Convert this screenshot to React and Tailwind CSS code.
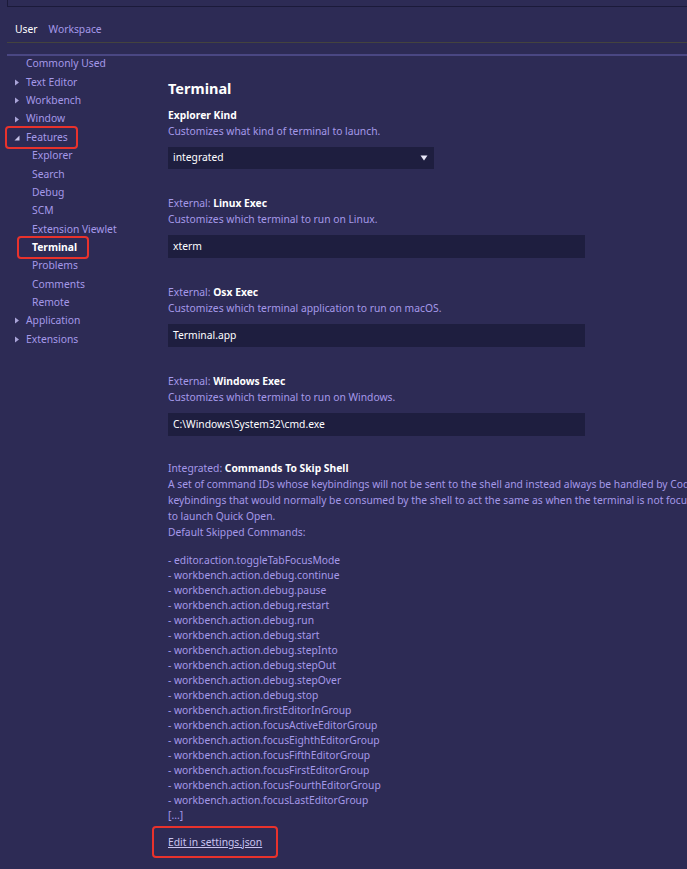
const font = { fontFamily: '"Noto Sans", "Open Sans", sans-serif' }

const tree = [
  { label: 'Commonly Used' },
  { label: 'Text Editor', arrow: 'closed' },
  { label: 'Workbench', arrow: 'closed' },
  { label: 'Window', arrow: 'closed' },
  { label: 'Features', arrow: 'open', boxed: true },
  { label: 'Explorer', child: true },
  { label: 'Search', child: true },
  { label: 'Debug', child: true },
  { label: 'SCM', child: true },
  { label: 'Extension Viewlet', child: true },
  { label: 'Terminal', child: true, active: true, boxed: true },
  { label: 'Problems', child: true },
  { label: 'Comments', child: true },
  { label: 'Remote', child: true },
  { label: 'Application', arrow: 'closed' },
  { label: 'Extensions', arrow: 'closed' },
]

const skipped = [
  'editor.action.toggleTabFocusMode',
  'workbench.action.debug.continue',
  'workbench.action.debug.pause',
  'workbench.action.debug.restart',
  'workbench.action.debug.run',
  'workbench.action.debug.start',
  'workbench.action.debug.stepInto',
  'workbench.action.debug.stepOut',
  'workbench.action.debug.stepOver',
  'workbench.action.debug.stop',
  'workbench.action.firstEditorInGroup',
  'workbench.action.focusActiveEditorGroup',
  'workbench.action.focusEighthEditorGroup',
  'workbench.action.focusFifthEditorGroup',
  'workbench.action.focusFirstEditorGroup',
  'workbench.action.focusFourthEditorGroup',
  'workbench.action.focusLastEditorGroup',
]

function Arrow({ open }) {
  if (open) {
    return (
      <svg width="6" height="6" viewBox="0 0 6 6" className="mr-[6px]">
        <path d="M5.5 0.5 L5.5 5.5 L0.5 5.5 Z" fill="#c8c4e8" />
      </svg>
    )
  }
  return (
    <svg width="6" height="7" viewBox="0 0 6 7" className="mr-[6px]">
      <path d="M1 0.5 L5 3.5 L1 6.5 Z" fill="#a9a4d8" />
    </svg>
  )
}

function TreeItem({ item }) {
  const color = item.active ? 'text-white font-bold' : 'text-[#a599e9]'
  return (
    <div className={`flex h-[18.35px] items-center ${item.child ? 'pl-[32px]' : item.arrow ? 'pl-[14px]' : 'pl-[26px]'}`}>
      {item.arrow && <Arrow open={item.arrow === 'open'} />}
      <span className={`relative whitespace-nowrap text-[10.3px] ${color}`}>
        {item.boxed && (
          <span
            className={`absolute top-[-4px] bottom-[-4px] rounded-[4px] border-2 border-[#e8322c] ${
              item.arrow ? 'left-[-21px] right-[-10px]' : 'left-[-15px] right-[-12px]'
            }`}
          />
        )}
        {item.label}
      </span>
    </div>
  )
}

function Setting({ prefix, title, desc, last, children }) {
  return (
    <div className={last ? 'mb-[24px]' : 'mb-[26px]'}>
      <div className="text-[10.3px] leading-[16px] font-bold text-white">
        {prefix && <span className="font-normal text-[#a599e9]">{prefix}: </span>}
        {title}
      </div>
      <div className="text-[10.3px] leading-[16px] text-[#a599e9]">{desc}</div>
      <div className="mt-[8px]">{children}</div>
    </div>
  )
}

function TextBox({ value }) {
  return (
    <div className="flex h-[23px] w-[417px] items-center bg-[#1e1e3f] px-[5px] text-[10.3px] text-white">
      {value}
    </div>
  )
}

export default function App() {
  return (
    <div className="h-[869px] w-[687px] overflow-hidden bg-[#2d2b55]" style={font}>
      <div className="ml-[7px] h-[7px] border-b border-l border-[#1b1a3a]" />
      <div className="flex h-[35px] items-center gap-[11px] pl-[15px] pt-[10px] text-[10.3px]">
        <span className="text-white">User</span>
        <span className="text-[#a599e9]">Workspace</span>
      </div>
      <div className="ml-[7px] h-px bg-[#44433f]" />
      <div className="ml-[7px] mt-[11px] h-[2px] bg-[#4a4783]" />
      <div className="flex">
        <div className="w-[168px] shrink-0 -mt-[1px]">
          {tree.map((item) => (
            <TreeItem key={item.label} item={item} />
          ))}
        </div>
        <div className="flex-1 pt-[20px]">
          <div className="text-[14.5px] leading-[24px] font-bold text-white">Terminal</div>
          <div className="mt-[7px]">
            <Setting title="Explorer Kind" desc="Customizes what kind of terminal to launch.">
              <div className="flex h-[22px] w-[266px] items-center justify-between bg-[#1e1e3f] px-[5px] text-[10.3px] text-white">
                <span>integrated</span>
                <svg width="8" height="6" viewBox="0 0 8 6" className="mr-[1px]">
                  <path d="M0.5 0.5 L7.5 0.5 L4 5.5 Z" fill="#e8e6f7" />
                </svg>
              </div>
            </Setting>
            <Setting prefix="External" title="Linux Exec" desc="Customizes which terminal to run on Linux.">
              <TextBox value="xterm" />
            </Setting>
            <Setting prefix="External" title="Osx Exec" desc="Customizes which terminal application to run on macOS.">
              <TextBox value="Terminal.app" />
            </Setting>
            <Setting prefix="External" title="Windows Exec" desc="Customizes which terminal to run on Windows." last>
              <TextBox value="C:\Windows\System32\cmd.exe" />
            </Setting>
          </div>
          <div className="whitespace-nowrap text-[10.3px] leading-[16px]">
            <div className="font-bold text-white">
              <span className="font-normal text-[#a599e9]">Integrated: </span>
              Commands To Skip Shell
            </div>
            <div className="text-[#a599e9]">
              <div>A set of command IDs whose keybindings will not be sent to the shell and instead always be handled by Code. This allows the use of</div>
              <div>keybindings that would normally be consumed by the shell to act the same as when the terminal is not focused, for example ctrl+p</div>
              <div>to launch Quick Open.</div>
              <div>Default Skipped Commands:</div>
              <div className="h-[13px]" />
              {skipped.map((cmd) => (
                <div key={cmd} className="leading-[15px]">- {cmd}</div>
              ))}
              <div className="leading-[15px]">[...]</div>
            </div>
            <div className="mt-[3px] ml-[-16px] inline-block rounded-[4px] border-2 border-[#e8322c] px-[14px] py-[6px]">
              <span className="text-[10.3px] text-[#c9c4f1] underline">Edit in settings.json</span>
            </div>
          </div>
        </div>
      </div>
    </div>
  )
}
